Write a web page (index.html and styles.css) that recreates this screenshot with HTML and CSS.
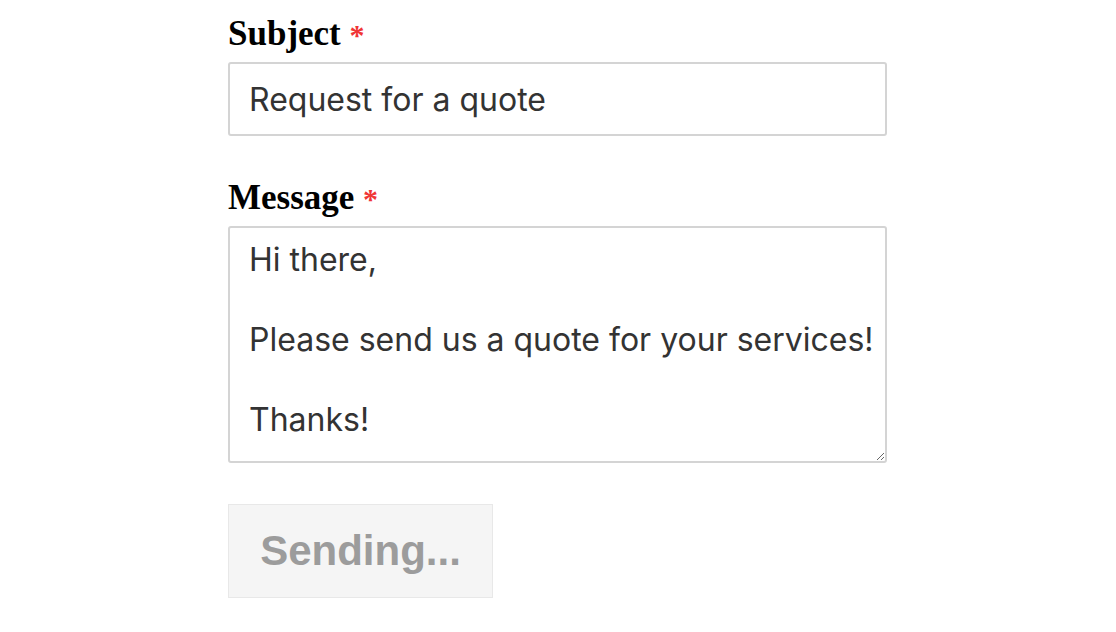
FILE: index.html
```html
<!DOCTYPE html>
<html lang="en">
<head>
<meta charset="utf-8">
<title>Contact form</title>
<link rel="stylesheet" href="styles.css">
</head>
<body>
<form class="form">
  <div class="field">
    <label class="label" for="subject">Subject <span class="req">*</span></label>
    <input class="input" id="subject" type="text" value="Request for a quote">
  </div>
  <div class="field field-message">
    <label class="label" for="message">Message <span class="req">*</span></label>
    <textarea class="textarea" id="message" wrap="off">Hi there,

Please send us a quote for your services!

Thanks!</textarea>
  </div>
  <button class="button" type="button" disabled>Sending...</button>
</form>
</body>
</html>
```
FILE: styles.css
```css
html, body {
  margin: 0;
  padding: 0;
  background: #ffffff;
}
.form {
  display: flex;
  flex-direction: column;
  align-items: flex-start;
  padding: 14px 0 0 228px;
  width: 659px;
}
.field {
  display: flex;
  flex-direction: column;
  width: 659px;
}
.field-message {
  margin-top: 42px;
}
.label {
  display: block;
  font-family: "Liberation Serif", serif;
  font-weight: bold;
  font-size: 35px;
  line-height: 40px;
  color: #000;
  margin-bottom: 7px;
}
.req {
  color: #f03535;
  font-size: 30px;
  font-weight: bold;
}
.input,
.textarea {
  box-sizing: border-box;
  width: 659px;
  border: 2px solid #d4d4d4;
  border-radius: 3px;
  font-family: Inter, "Noto Sans", sans-serif;
  font-size: 32px;
  color: #333;
  background: #fff;
  margin: 0;
  outline: none;
}
.input {
  height: 74px;
  padding: 0 19px;
}
.textarea {
  height: 237px;
  padding: 12px 8px 12px 19px;
  line-height: 40px;
  resize: vertical;
  overflow: hidden;
  white-space: pre;
}
.button {
  margin-top: 41px;
  box-sizing: border-box;
  width: 265px;
  height: 94px;
  border: 1px solid #e8e8e8;
  background: #f5f5f5;
  color: #9c9c9c;
  font-family: "Liberation Sans", Arial, sans-serif;
  font-weight: bold;
  font-size: 42px;
  padding: 0;
  border-radius: 0;
}
```
